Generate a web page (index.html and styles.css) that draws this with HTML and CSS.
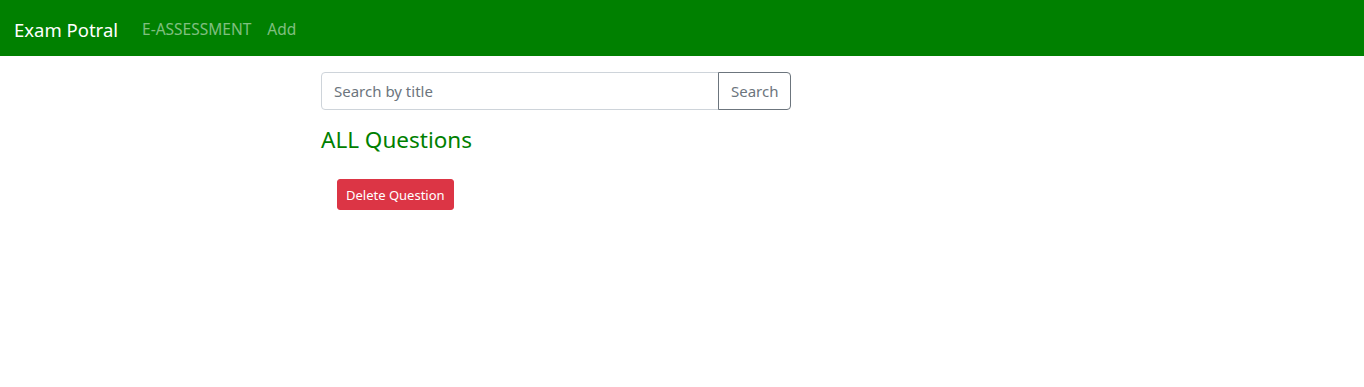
FILE: index.html
```html
<!DOCTYPE html>
<html lang="en">

<head>
  <meta charset="UTF-8" />
  <meta name="viewport" content="width=device-width, initial-scale=1.0" />
  <title>Exam Potral</title>
  <link rel="stylesheet" href="styles.css">
</head>

<body>
  <nav class="navbar">
    <a href="#" class="navbar-brand">Exam Potral</a>
    <div class="navbar-nav">
      <a href="#" class="nav-link">E-ASSESSMENT</a>
      <a href="#" class="nav-link">Add</a>
    </div>
  </nav>

  <div class="container">
    <div class="list">
      <div class="col">
        <div class="input-group">
          <input type="text" class="form-control" placeholder="Search by title" />
          <button class="btn btn-outline" type="button">Search</button>
        </div>
      </div>
      <div class="col">
        <h4 class="title">ALL Questions</h4>
        <button class="btn-sm btn-danger">Delete Question</button>
      </div>
    </div>
  </div>
</body>

</html>
```

FILE: styles.css
```css
* {
  box-sizing: border-box;
}

body {
  margin: 0;
  font-family: "Noto Sans", "Open Sans", sans-serif;
  font-size: 16px;
  line-height: 1.5;
  color: #212529;
  background: #fff;
}

.navbar {
  display: flex;
  align-items: center;
  height: 56px;
  padding: 10px 16px 6px 14px;
  background-color: #008000;
}

.navbar-brand {
  font-size: 18.5px;
  color: #fff;
  text-decoration: none;
  margin-right: 16px;
  padding: 5px 0;
}

.navbar-nav {
  display: flex;
}

.nav-link {
  color: rgba(255, 255, 255, 0.5);
  text-decoration: none;
  padding: 0 8px;
  font-size: 15.5px;
}

.container {
  max-width: 1140px;
  margin: 16px auto 0;
  padding: 0 15px;
}

.list {
  max-width: 750px;
  margin: 0 auto;
}

.col {
  width: 500px;
  padding: 0 16px 0 14px;
}

.input-group {
  display: flex;
  height: 38px;
  margin-bottom: 16px;
}

.form-control {
  flex: 1;
  height: 38px;
  padding: 6px 12px;
  font-family: inherit;
  font-size: 15px;
  color: #495057;
  border: 1px solid #ced4da;
  border-radius: 4px 0 0 4px;
  outline: none;
}

.form-control::placeholder {
  color: #6c757d;
}

.btn {
  font-family: inherit;
  font-size: 15px;
  padding: 6px 12px;
  background: #fff;
  cursor: pointer;
}

.btn-outline {
  width: 73px;
  color: #6c757d;
  border: 1px solid #6c757d;
  border-radius: 0 4px 4px 0;
  margin-left: -1px;
}

.title {
  margin: 3px 0 8px;
  font-size: 22.5px;
  font-weight: 400;
  line-height: 1.2;
  color: #008000;
}

.btn-sm {
  margin: 18px 16px;
  height: 31px;
  padding: 4px 8px;
  font-family: inherit;
  font-size: 13px;
  border-radius: 3px;
  border: 1px solid transparent;
  cursor: pointer;
}

.btn-danger {
  color: #fff;
  background-color: #dc3545;
  border-color: #dc3545;
}
```
